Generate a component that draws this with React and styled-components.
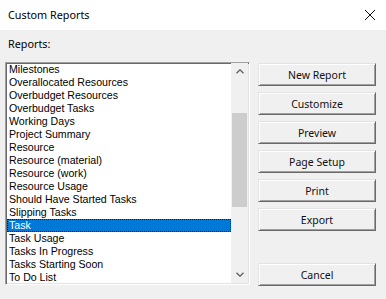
import React from 'react';
import styled, { createGlobalStyle } from 'styled-components';

const Global = createGlobalStyle`
    html, body {
        margin: 0;
        padding: 0;
        background: #f0f0f0;
    }
    * { box-sizing: border-box; }
`;

const Dialog = styled.div`
    width: 386px;
    height: 299px;
    display: flex;
    flex-direction: column;
    background: #f0f0f0;
    font-family: "Noto Sans", "Open Sans", sans-serif;
    color: #000;
    overflow: hidden;
`;

const TitleBar = styled.div`
    height: 30px;
    background: #fff;
    display: flex;
    align-items: center;
    justify-content: space-between;
    padding: 0 8px 1px 8px;
    font-size: 10.8px;
`;

const Close = styled.div`
    width: 12px;
    height: 12px;
    margin-right: 2px;
    display: flex;
`;

const Body = styled.div`
    flex: 1;
    padding: 6px 10px 0 5px;
`;

const Label = styled.div`
    height: 16px;
    line-height: 16px;
    font-size: 10.8px;
    padding-left: 3px;
    margin-bottom: 10px;
`;

const Row = styled.div`
    display: flex;
    align-items: flex-start;
`;

const ListBox = styled.div`
    width: 245px;
    height: 223px;
    display: flex;
    background: #fff;
    border-top: 1px solid #a0a0a0;
    border-left: 1px solid #a0a0a0;
    border-right: 1px solid #fff;
    border-bottom: 1px solid #fff;
    box-shadow: inset 1px 1px 0 #696969, inset -1px -1px 0 #e3e3e3;
    padding: 0 1px 1px 1px;
    overflow: hidden;
`;

const Items = styled.div`
    flex: 1;
    overflow: hidden;
`;

const Item = styled.div`
    height: 13px;
    line-height: 13px;
    font-family: "Liberation Sans", Arial, sans-serif;
    font-size: 10.6px;
    padding-left: 2px;
    white-space: nowrap;
    background: ${p => (p.$selected ? '#0078d7' : 'transparent')};
    color: ${p => (p.$selected ? '#fff' : '#000')};
    outline: ${p => (p.$selected ? '1px dotted rgba(0,0,0,0.7)' : 'none')};
    outline-offset: -1px;
`;

const ScrollBar = styled.div`
    width: 17px;
    display: flex;
    flex-direction: column;
    background: #f0f0f0;
`;

const Arrow = styled.div`
    height: 17px;
    display: flex;
    align-items: center;
    justify-content: center;
`;

const Track = styled.div`
    flex: 1;
    padding-top: 33px;
    padding-bottom: 59px;
    display: flex;
`;

const Thumb = styled.div`
    flex: 1;
    margin: 0 1px;
    background: #cdcdcd;
`;

const Buttons = styled.div`
    display: flex;
    flex-direction: column;
    gap: 6px;
    margin-left: 8px;
    padding-top: 1px;
`;

const Button = styled.button`
    width: 118px;
    height: 23px;
    margin-top: ${p => p.$offset || 0}px;
    padding: 0;
    font-family: "Noto Sans", "Open Sans", sans-serif;
    font-size: 10.5px;
    color: #111;
    background: #f0f0f0;
    border-top: 1px solid #e3e3e3;
    border-left: 1px solid #e3e3e3;
    border-right: 1px solid #696969;
    border-bottom: 1px solid #696969;
    box-shadow: inset 1px 1px 0 #fff, inset -1px -1px 0 #a0a0a0;
`;

const reports = [
    'Milestones',
    'Overallocated Resources',
    'Overbudget Resources',
    'Overbudget Tasks',
    'Working Days',
    'Project Summary',
    'Resource',
    'Resource (material)',
    'Resource (work)',
    'Resource Usage',
    'Should Have Started Tasks',
    'Slipping Tasks',
    'Task',
    'Task Usage',
    'Tasks In Progress',
    'Tasks Starting Soon',
    'To Do List',
];

const Chevron = ({ down }) => (
    <svg width="8" height="5" viewBox="0 0 8 5">
        <path
            d={down ? 'M0.5 0.8 L4 4.2 L7.5 0.8' : 'M0.5 4.2 L4 0.8 L7.5 4.2'}
            fill="none"
            stroke="#606060"
            strokeWidth="1.3"
        />
    </svg>
);

export default function App() {
    return (
        <>
            <Global />
            <Dialog>
                <TitleBar>
                    <span>Custom Reports</span>
                    <Close>
                        <svg width="12" height="12" viewBox="0 0 12 12">
                            <path d="M1 1 L11 11 M11 1 L1 11" stroke="#111" strokeWidth="1" />
                        </svg>
                    </Close>
                </TitleBar>
                <Body>
                    <Label>Reports:</Label>
                    <Row>
                        <ListBox>
                            <Items>
                                {reports.map(r => (
                                    <Item key={r} $selected={r === 'Task'}>{r}</Item>
                                ))}
                            </Items>
                            <ScrollBar>
                                <Arrow><Chevron /></Arrow>
                                <Track><Thumb /></Track>
                                <Arrow><Chevron down /></Arrow>
                            </ScrollBar>
                        </ListBox>
                        <Buttons>
                            <Button>New Report</Button>
                            <Button>Customize</Button>
                            <Button>Preview</Button>
                            <Button>Page Setup</Button>
                            <Button>Print</Button>
                            <Button>Export</Button>
                            <Button $offset={26}>Cancel</Button>
                        </Buttons>
                    </Row>
                </Body>
            </Dialog>
        </>
    );
}
